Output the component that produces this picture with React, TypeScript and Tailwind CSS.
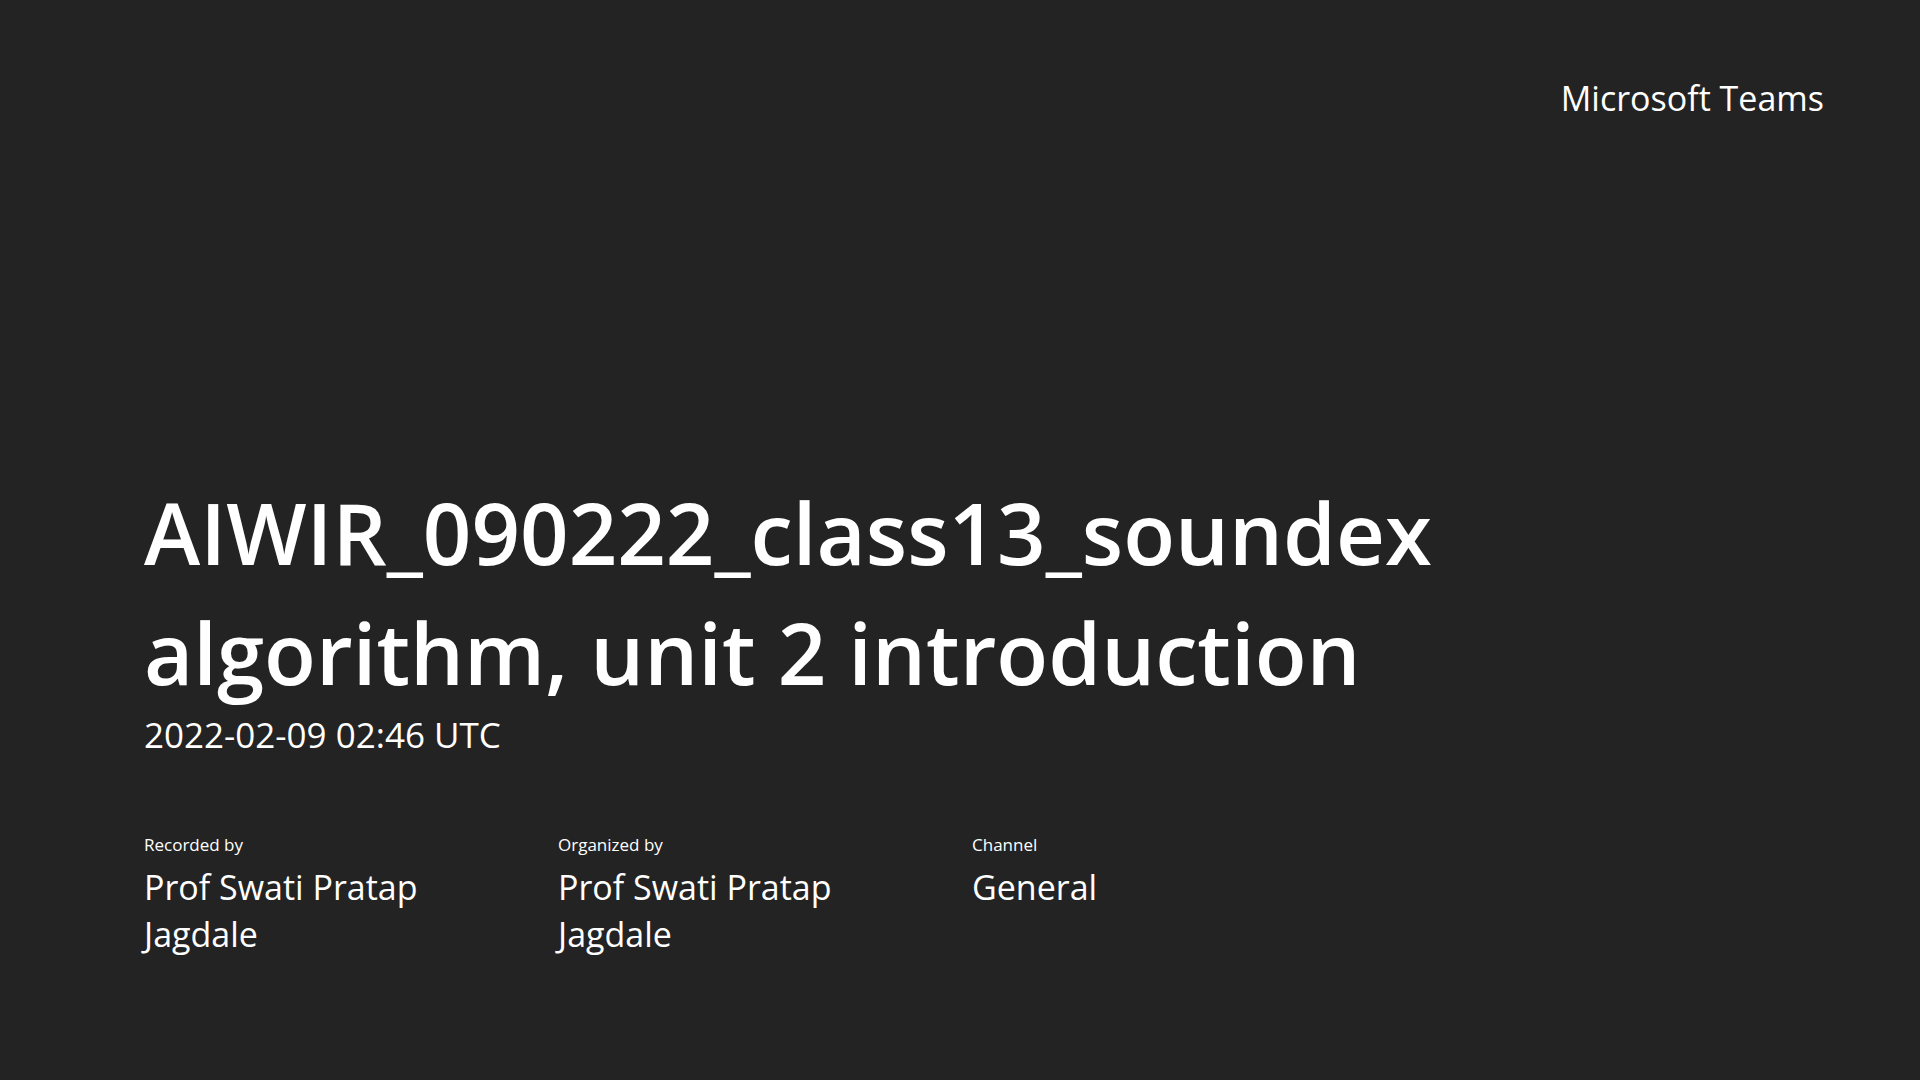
import React from 'react';

const people = [
  { label: 'Recorded by', value: 'Prof Swati Pratap Jagdale' },
  { label: 'Organized by', value: 'Prof Swati Pratap Jagdale' },
  { label: 'Channel', value: 'General' },
];

export default function App() {
  return (
    <div className="w-[1920px] h-[1080px] bg-[#232323] text-white flex flex-col font-['Open_Sans',sans-serif] overflow-hidden">
      {/* brand */}
      <div className="flex justify-end pr-[96px] pt-[74px]">
        <span className="text-[34px] leading-[48px]">Microsoft Teams</span>
      </div>

      {/* recording card */}
      <div className="flex flex-col pl-[144px] mt-[350px]">
        <h1 className="text-[85px] leading-[120px] font-semibold w-[1400px]">
          AIWIR_090222_class13_soundex algorithm, unit 2 introduction
        </h1>
        <div className="text-[35px] leading-[37px] mt-[4px]">2022-02-09 02:46 UTC</div>

        <div className="flex mt-[80px]">
          {people.map((p) => (
            <div key={p.label} className="w-[414px] flex flex-col">
              <span className="text-[17px] leading-[24px]">{p.label}</span>
              <span className="text-[34px] leading-[47px] max-w-[320px] mt-[7px]">{p.value}</span>
            </div>
          ))}
        </div>
      </div>
    </div>
  );
}
